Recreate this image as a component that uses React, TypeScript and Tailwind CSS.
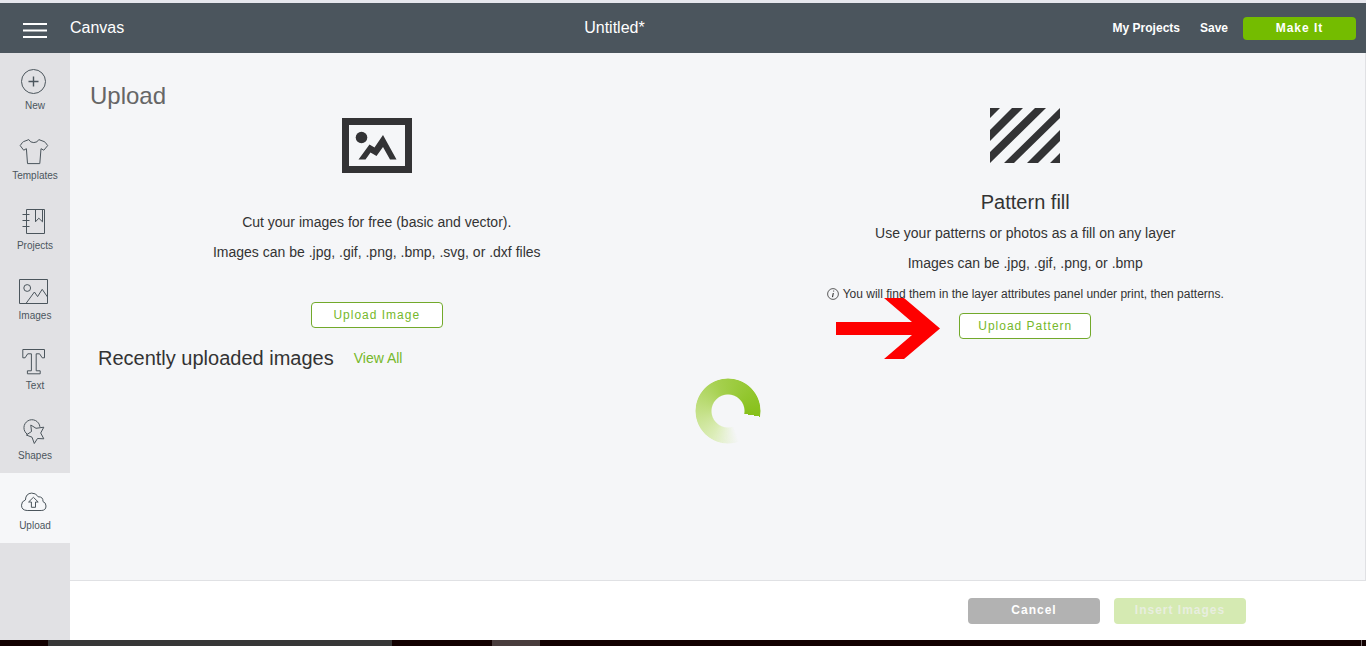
import type { ReactNode } from "react";

type NavItem = { label: string; icon: ReactNode; active?: boolean };

function Icon({ children }: { children: ReactNode }) {
  return (
    <svg
      width="32"
      height="32"
      viewBox="0 0 32 32"
      fill="none"
      stroke="#4b555c"
      strokeWidth="1"
      strokeLinejoin="round"
      aria-hidden="true"
    >
      {children}
    </svg>
  );
}

const navItems: NavItem[] = [
  {
    label: "New",
    icon: (
      <Icon>
        <circle cx="15.5" cy="15.5" r="12" />
        <path d="M15.5 10.500v10M10.5 15.500h10" strokeWidth="1.4" />
      </Icon>
    ),
  },
  {
    label: "Templates",
    icon: (
      <Icon>
        <path d="M10.8 3.6L5.6 5.6Q4.7 6 4.2 6.8L2.2 9.6L5.7 14.2L8.4 12.7L9.5 27.6H21.8L23 12.7L25.8 14.2L29.7 9.6L27.6 6.8Q27.1 6 26.2 5.6L20.8 3.6Q19.5 6.6 15.8 6.6Q12.1 6.6 10.8 3.6Z" />
      </Icon>
    ),
  },
  {
    label: "Projects",
    icon: (
      <Icon>
        <path d="M8.5 3.5h18v24h-18zM4.5 8.5h7M4.5 14.5h7M4.5 20.5h7M17.5 3.5v12.3l3.3-3.6l3.7 3.6V3.5" />
      </Icon>
    ),
  },
  {
    label: "Images",
    icon: (
      <Icon>
        <path d="M1.5 3.5h28v24h-28z" />
        <circle cx="9.2" cy="12" r="3.4" />
        <path d="M8.2 27.2L16.4 16L19.6 20.6L24.2 13.3L29.5 21" />
      </Icon>
    ),
  },
  {
    label: "Text",
    icon: (
      <Icon>
        <path d="M4.8 3.5H26.5V11.8H24.2L21.6 7.8H18.2V24.8H22.2V27.8H9.4V24.8H13.4V7.8H9.7L7.1 11.8H4.8Z" />
      </Icon>
    ),
  },
  {
    label: "Shapes",
    icon: (
      <Icon>
        <path d="M9.400 18.300A8 8 0 1 1 21.900 10.800" />
        <path d="M12.800 9L18 12.300L25.800 11.200L22.700 17L25.800 22.800L19.500 22.500L16.300 27.500L14 21.200L8.300 19L13.500 15.500Z" />
      </Icon>
    ),
  },
  {
    label: "Upload",
    active: true,
    icon: (
      <Icon>
        <path d="M9.2 24.5Q3.5 24.3 3.5 19.2Q3.5 15.2 7.4 14Q7.7 7.4 13.7 7.1Q18.2 7 20.1 10.8Q25.2 10.5 25 15.6Q28 16.6 28 20Q28 24.5 23.2 24.5Z" />
        <path d="M15.4 11.3L20.2 16H17.5V21.3H13.4V16H10.6Z" />
      </Icon>
    ),
  },
];

function OutlineButton({ children }: { children: ReactNode }) {
  return (
    <button
      type="button"
      className="flex h-[26px] w-[132px] items-center justify-center rounded border border-[#72a92b] bg-white text-xs tracking-[1px] text-[#76b82a]"
    >
      {children}
    </button>
  );
}

function Header() {
  return (
    <header className="flex h-[53px] shrink-0 items-center justify-between border-t-3 border-[#e6e7ed] bg-[#4b555d] pr-[10px] text-white">
      <div className="flex items-center">
        <button type="button" aria-label="Menu" className="flex w-[70px] justify-center pt-1">
          <svg width="24" height="17" viewBox="0 0 24 17" stroke="#fff" strokeWidth="2" aria-hidden="true">
            <path d="M0 2h24M0 8.500h24M0 15h24" />
          </svg>
        </button>
        <span className="text-base">Canvas</span>
      </div>
      <h1 className="mr-2 text-base">Untitled*</h1>
      <div className="flex items-center text-xs font-bold">
        <a href="#projects">My Projects</a>
        <a href="#save" className="ml-5">
          Save
        </a>
        <button
          type="button"
          className="ml-[15px] flex h-[23px] w-[113px] items-center justify-center rounded bg-[#74bc00] font-bold tracking-[1px]"
        >
          Make It
        </button>
      </div>
    </header>
  );
}

function Sidebar() {
  return (
    <nav className="w-[70px] shrink-0 bg-[#e1e1e4]">
      {navItems.map((item) => (
        <a
          key={item.label}
          href={`#${item.label.toLowerCase()}`}
          aria-current={item.active ? "page" : undefined}
          className={
            item.active
              ? "flex h-[70px] flex-col items-center bg-[#f6f7f9] pt-[13px] text-[10px] text-[#4b555d]"
              : "flex h-[70px] flex-col items-center pt-[13px] text-[10px] text-[#4b555d]"
          }
        >
          <span className="mr-[2px]">{item.icon}</span>
          <span className="leading-4">{item.label}</span>
        </a>
      ))}
    </nav>
  );
}

function Arrow() {
  return (
    <svg
      className="absolute right-full bottom-[-20px] mr-[19px]"
      width="104"
      height="61"
      viewBox="0 0 104 61"
      fill="#fe0000"
      aria-hidden="true"
    >
      <path d="M48 0H68L104 30.500L68 61H48L76 37H0V24H76Z" />
    </svg>
  );
}

function Spinner() {
  return (
    <div
      role="status"
      aria-label="Loading"
      className="size-[66px] rounded-full bg-[conic-gradient(from_100deg,transparent_0deg,transparent_60deg,#dcedb9_110deg,#c3e085_170deg,#a5d04e_240deg,#86c019_360deg)] [mask-image:radial-gradient(circle,transparent_16px,black_17px,black_32px,transparent_33px)]"
    />
  );
}

function UploadPanel() {
  return (
    <section className="flex-1 border-r border-b border-[#e0e1e4] bg-[#f5f6f8] text-[#333]">
      <h2 className="pt-[31px] pl-5 text-2xl leading-6 text-[#666]">Upload</h2>
      <div className="grid grid-cols-2 text-center text-sm leading-[30px]">
        <div className="flex flex-col items-center pt-[10px] pr-[34px]">
          <svg width="70" height="55" viewBox="0 0 70 55" fill="#333335" aria-hidden="true">
            <path fillRule="evenodd" d="M0 0H70V55H0ZM7 7V48H63V7Z" />
            <circle cx="19.500" cy="19.500" r="5.800" />
            <path d="M16.500 41.500L27.500 26.500L32.500 29.500L41 17L54.500 41.500H48L41 29L34.500 38L28.500 34.500L23.500 41.500Z" />
          </svg>
          <p className="mt-[34px]">Cut your images for free (basic and vector).</p>
          <p className="mb-[35px]">Images can be .jpg, .gif, .png, .bmp, .svg, or .dxf files</p>
          <OutlineButton>Upload Image</OutlineButton>
          <div className="mt-[15px] flex gap-5 self-start pl-7">
            <h3 className="text-xl leading-[30px]">Recently uploaded images</h3>
            <a href="#all" className="text-[#76b82a]">
              View All
            </a>
          </div>
        </div>
        <div className="flex flex-col items-center pr-8">
          <svg width="70" height="55" viewBox="0 0 70 55" fill="#333335" aria-hidden="true">
            <path d="M0 0H10L0 10ZM22 0H33L0 33V22ZM45 0H56L0 55V44ZM70 0V10L24 55H14ZM70 22V33L48 55H37ZM70 45V55H60Z" />
          </svg>
          <h3 className="mt-6 text-xl leading-[30px]">Pattern fill</h3>
          <p className="mt-px">Use your patterns or photos as a fill on any layer</p>
          <p>Images can be .jpg, .gif, .png, or .bmp</p>
          <p className="flex items-center gap-1 text-xs leading-8">
            <svg width="12" height="12" viewBox="0 0 12 12" fill="none" stroke="#333" aria-hidden="true">
              <circle cx="6" cy="6" r="5.400" strokeWidth="0.800" />
              <path d="M6.300 5L5.500 9.200M6.700 2.600L6.600 3.500" strokeWidth="1.100" />
            </svg>
            You will find them in the layer attributes panel under print, then patterns.
          </p>
          <div className="relative mt-[3px]">
            <Arrow />
            <OutlineButton>Upload Pattern</OutlineButton>
          </div>
        </div>
      </div>
      <div className="mt-[5px] flex justify-center pl-5">
        <Spinner />
      </div>
    </section>
  );
}

function Actions() {
  return (
    <div className="flex h-[59px] items-center justify-end gap-[14px] bg-white pr-[120px] text-xs font-bold tracking-[1px]">
      <button
        type="button"
        className="flex h-[26px] w-[132px] items-center justify-center rounded bg-[#b2b2b2] pb-[2px] text-white"
      >
        Cancel
      </button>
      <button
        type="button"
        disabled
        className="flex h-[26px] w-[132px] items-center justify-center rounded bg-[#d5eab2] pb-[2px] text-[#e8eedf]"
      >
        Insert Images
      </button>
    </div>
  );
}

export default function App() {
  return (
    <div className="flex min-h-screen flex-col font-['Liberation_Sans',Arial,sans-serif]">
      <Header />
      <div className="flex flex-1">
        <Sidebar />
        <main className="flex flex-1 flex-col">
          <UploadPanel />
          <Actions />
        </main>
      </div>
      <footer className="flex h-[6px] shrink-0 bg-[#120000]">
        <div className="ml-12 w-[344px] bg-[#373737]" />
        <div className="ml-[100px] w-12 bg-[#483c3c]" />
        <div className="mr-1 ml-auto w-px bg-[#776d6d]" />
      </footer>
    </div>
  );
}
